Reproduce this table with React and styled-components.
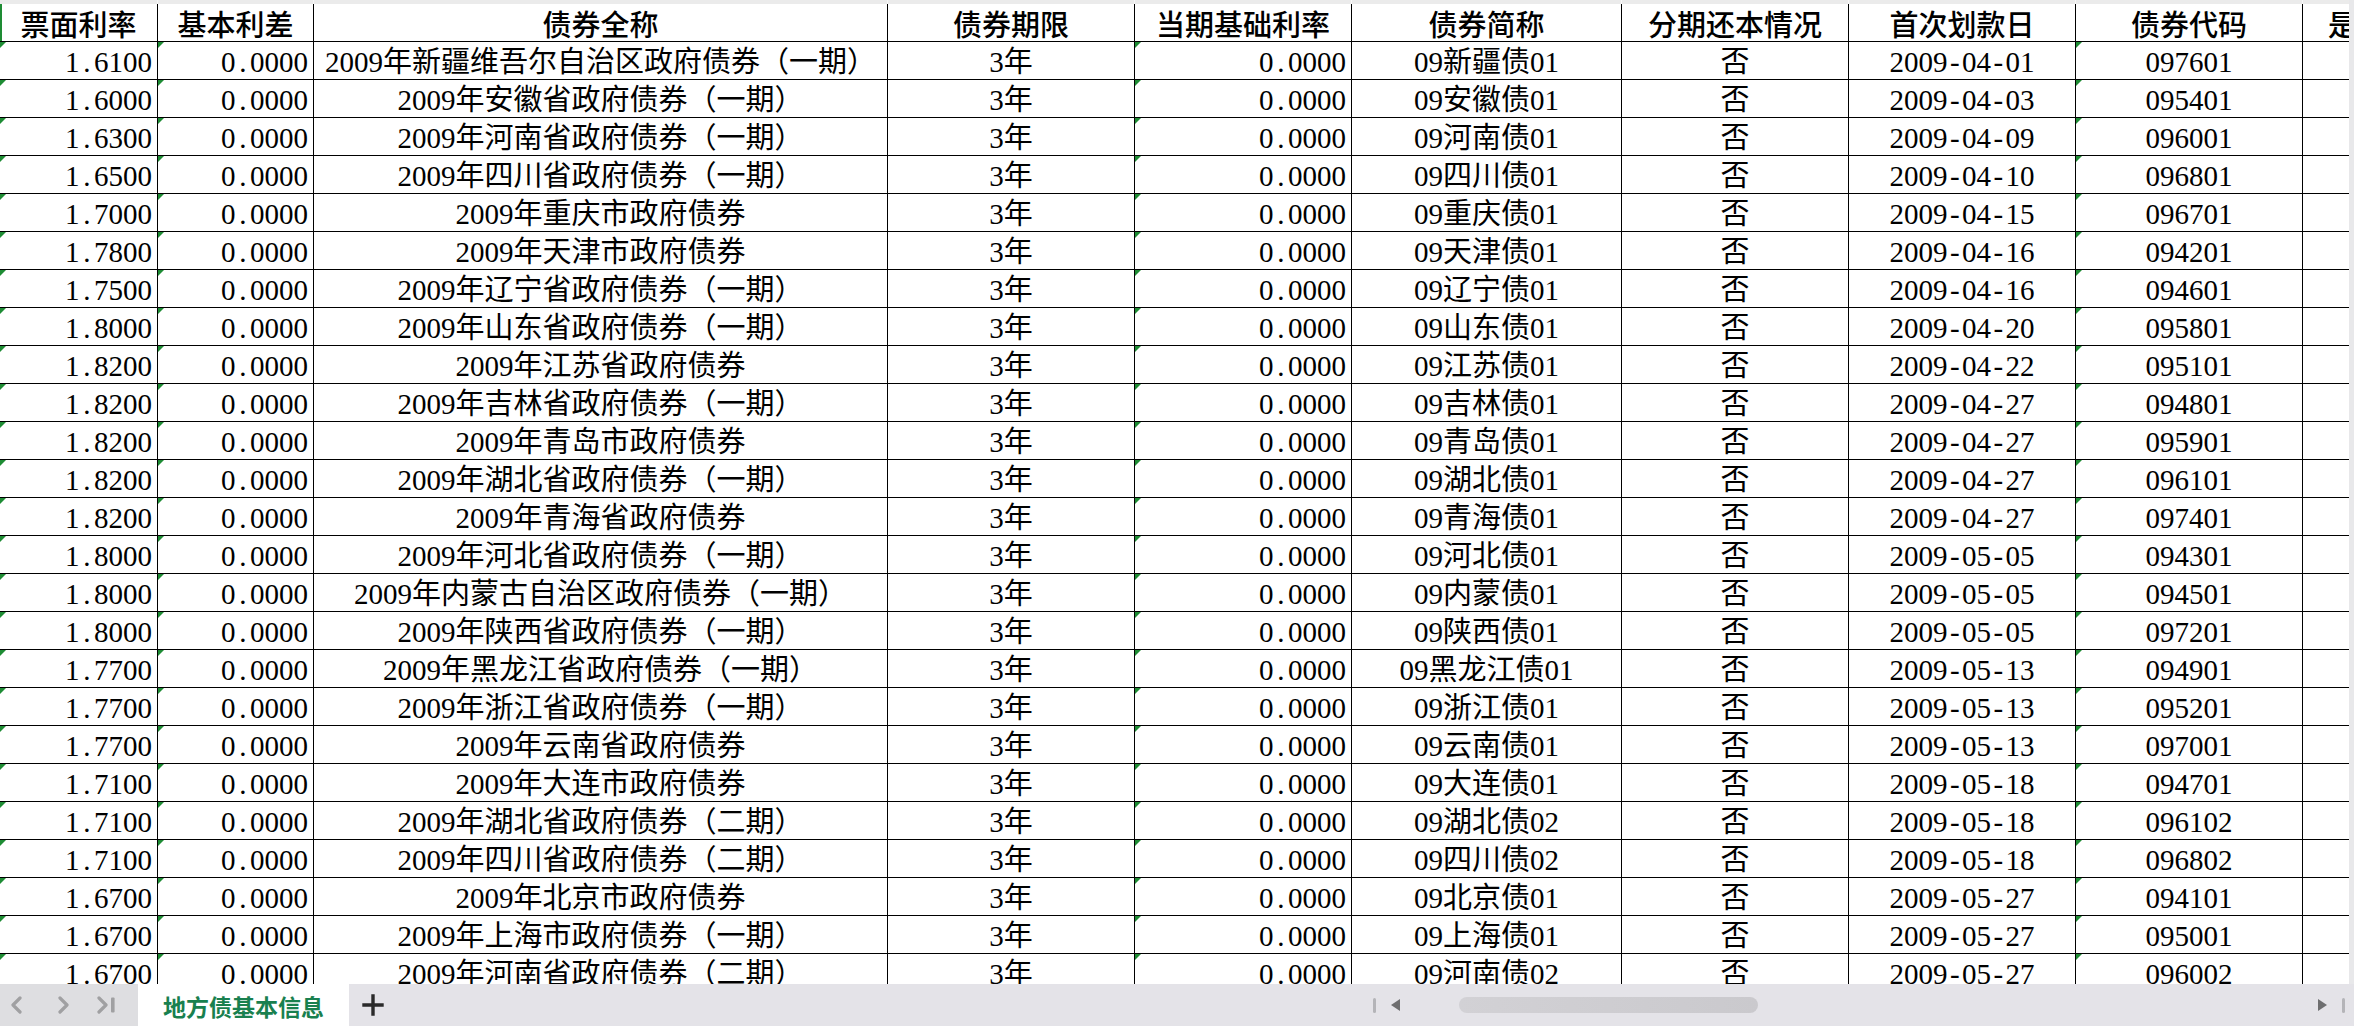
import React from "react";
import styled, { createGlobalStyle } from "styled-components";

const GlobalStyle = createGlobalStyle`
  html, body { margin: 0; padding: 0; background: #ffffff; overflow: hidden; }
  #root { width: 2354px; height: 1026px; }
`;

const COLS = [158, 156, 574, 247, 217, 270, 227, 227, 227, 200];
const TEMPLATE = COLS.map((w) => `${w}px`).join(" ");

const Page = styled.div`
  width: 2354px;
  height: 1026px;
  display: flex;
  flex-direction: column;
  font-family: "Liberation Serif", "Noto Sans CJK SC", serif;
  color: #000;
`;

const SheetArea = styled.div`
  flex: 1;
  display: flex;
  min-height: 0;
`;

const GridViewport = styled.div`
  flex: 1;
  overflow: hidden;
  display: flex;
  flex-direction: column;
`;

const VScroll = styled.div`
  width: 5px;
  background: #e8e8ea;
`;

const Row = styled.div`
  display: grid;
  grid-template-columns: ${TEMPLATE};
  flex: none;
`;

const StripCell = styled.div`
  height: 4px;
  background: #ebebeb;
  border-right: 1px solid #f7f7f7;
  box-sizing: border-box;
`;

const Cell = styled.div`
  position: relative;
  box-sizing: border-box;
  height: 38px;
  border-right: 1px solid #000;
  border-bottom: 1px solid #000;
  display: flex;
  align-items: center;
  justify-content: ${(p) => (p.$align === "right" ? "flex-end" : "center")};
  padding: 3px 5px 0 5px;
  font-size: 29px;
  line-height: 30px;
  white-space: nowrap;
  ${(p) =>
    p.$marker &&
    `
    &::before {
      content: "";
      position: absolute;
      left: 0;
      top: 0;
      width: 0;
      height: 0;
      border-top: 6px solid #1e8c34;
      border-right: 6px solid transparent;
    }
  `}
`;

const HeadCell = styled(Cell)`
  justify-content: ${(p) => (p.$lead ? "flex-start" : "center")};
  padding: 1px 5px 0 ${(p) => (p.$lead ? "25px" : "5px")};
  font-family: "Noto Sans CJK SC", serif;
  font-size: 29px;
  line-height: 32px;
  font-weight: 500;
  ${(p) => p.$lead && `overflow: hidden;`}
  ${(p) => p.$active && `box-shadow: inset 2px 0 0 #1e8c34;`}
`;

const HalfChar = styled.span`
  display: inline-block;
  width: 0.5em;
  text-align: center;
`;

const TabBar = styled.div`
  height: 42px;
  flex: none;
  display: flex;
  align-items: stretch;
  background: #e4e3e8;
`;

const NavGroup = styled.div`
  width: 138px;
  display: flex;
  align-items: center;
  padding-left: 10px;
  background: #dedee1;
  box-sizing: border-box;
`;

const NavBtn = styled.span`
  width: ${(p) => p.$w}px;
  display: flex;
  align-items: center;
  justify-content: flex-start;
  color: #a0a0a2;
`;

const SheetTab = styled.div`
  width: 211px;
  background: #ffffff;
  display: flex;
  align-items: center;
  justify-content: center;
  font-family: "Noto Sans CJK SC", sans-serif;
  font-weight: 700;
  font-size: 23px;
  line-height: 28px;
  color: #19804f;
  padding-top: 2px;
  box-sizing: border-box;
`;

const AddBtn = styled.div`
  width: 48px;
  display: flex;
  align-items: center;
  justify-content: center;
  color: #2a2a2a;
`;

const Spacer = styled.div`
  flex: 1;
`;

const HScroll = styled.div`
  width: 994px;
  display: flex;
  align-items: center;
  padding-left: 13px;
  box-sizing: border-box;
`;

const Sep = styled.span`
  width: 3px;
  height: 15px;
  border-radius: 2px;
  background: #b4b4b8;
  flex: none;
`;

const ArrowBox = styled.span`
  width: ${(p) => p.$w}px;
  display: flex;
  justify-content: center;
  align-items: center;
  flex: none;
`;

const Track = styled.div`
  flex: 1;
  display: flex;
  align-items: center;
`;

const Thumb = styled.div`
  width: 299px;
  height: 16px;
  border-radius: 8px;
  background: linear-gradient(90deg, #d2d1d5, #cac9cd);
  margin-left: ${(p) => p.$offset}px;
`;

const headers = [
  "票面利率",
  "基本利差",
  "债券全称",
  "债券期限",
  "当期基础利率",
  "债券简称",
  "分期还本情况",
  "首次划款日",
  "债券代码",
  "是否城投",
];

const rows = [
  ["1.6100", "2009年新疆维吾尔自治区政府债券（一期）", "09新疆债01", "2009-04-01", "097601"],
  ["1.6000", "2009年安徽省政府债券（一期）", "09安徽债01", "2009-04-03", "095401"],
  ["1.6300", "2009年河南省政府债券（一期）", "09河南债01", "2009-04-09", "096001"],
  ["1.6500", "2009年四川省政府债券（一期）", "09四川债01", "2009-04-10", "096801"],
  ["1.7000", "2009年重庆市政府债券", "09重庆债01", "2009-04-15", "096701"],
  ["1.7800", "2009年天津市政府债券", "09天津债01", "2009-04-16", "094201"],
  ["1.7500", "2009年辽宁省政府债券（一期）", "09辽宁债01", "2009-04-16", "094601"],
  ["1.8000", "2009年山东省政府债券（一期）", "09山东债01", "2009-04-20", "095801"],
  ["1.8200", "2009年江苏省政府债券", "09江苏债01", "2009-04-22", "095101"],
  ["1.8200", "2009年吉林省政府债券（一期）", "09吉林债01", "2009-04-27", "094801"],
  ["1.8200", "2009年青岛市政府债券", "09青岛债01", "2009-04-27", "095901"],
  ["1.8200", "2009年湖北省政府债券（一期）", "09湖北债01", "2009-04-27", "096101"],
  ["1.8200", "2009年青海省政府债券", "09青海债01", "2009-04-27", "097401"],
  ["1.8000", "2009年河北省政府债券（一期）", "09河北债01", "2009-05-05", "094301"],
  ["1.8000", "2009年内蒙古自治区政府债券（一期）", "09内蒙债01", "2009-05-05", "094501"],
  ["1.8000", "2009年陕西省政府债券（一期）", "09陕西债01", "2009-05-05", "097201"],
  ["1.7700", "2009年黑龙江省政府债券（一期）", "09黑龙江债01", "2009-05-13", "094901"],
  ["1.7700", "2009年浙江省政府债券（一期）", "09浙江债01", "2009-05-13", "095201"],
  ["1.7700", "2009年云南省政府债券", "09云南债01", "2009-05-13", "097001"],
  ["1.7100", "2009年大连市政府债券", "09大连债01", "2009-05-18", "094701"],
  ["1.7100", "2009年湖北省政府债券（二期）", "09湖北债02", "2009-05-18", "096102"],
  ["1.7100", "2009年四川省政府债券（二期）", "09四川债02", "2009-05-18", "096802"],
  ["1.6700", "2009年北京市政府债券", "09北京债01", "2009-05-27", "094101"],
  ["1.6700", "2009年上海市政府债券（一期）", "09上海债01", "2009-05-27", "095001"],
  ["1.6700", "2009年河南省政府债券（二期）", "09河南债02", "2009-05-27", "096002"],
];

// Render '.' and '-' in half-width boxes, like the sheet's font does
const Num = ({ text }) => (
  <span>
    {text.split(/([.\-])/).map((part, i) =>
      part === "." || part === "-" ? (
        <HalfChar key={i}>{part}</HalfChar>
      ) : (
        <React.Fragment key={i}>{part}</React.Fragment>
      )
    )}
  </span>
);

const Chevron = ({ dir }) => (
  <svg width="14" height="18" viewBox="0 0 14 18">
    <path
      d={dir === "left" ? "M10 2 L3 9 L10 16" : "M4 2 L11 9 L4 16"}
      fill="none"
      stroke="currentColor"
      strokeWidth="3.2"
      strokeLinecap="round"
      strokeLinejoin="round"
    />
  </svg>
);

const LastIcon = () => (
  <svg width="22" height="18" viewBox="0 0 22 18">
    <path d="M3 2 L10 9 L3 16" fill="none" stroke="currentColor" strokeWidth="3.2" strokeLinecap="round" strokeLinejoin="round" />
    <rect x="15" y="1.5" width="3.6" height="15" rx="1" fill="currentColor" />
  </svg>
);

const PlusIcon = () => (
  <svg width="22" height="22" viewBox="0 0 22 22">
    <path d="M11 2 V20 M2 11 H20" stroke="currentColor" strokeWidth="3.4" strokeLinecap="square" />
  </svg>
);

const Tri = ({ dir }) => (
  <svg width="10" height="12" viewBox="0 0 10 12">
    <path d={dir === "left" ? "M9 0 L0 6 L9 12 Z" : "M1 0 L10 6 L1 12 Z"} fill="#6e6e70" />
  </svg>
);

export default function App() {
  return (
    <Page>
      <GlobalStyle />
      <SheetArea>
        <GridViewport>
          <Row>
            {COLS.map((_, i) => (
              <StripCell key={i} />
            ))}
          </Row>
          <Row>
            {headers.map((h, i) => (
              <HeadCell key={i} $lead={i === 9} $active={i === 0}>
                {h}
              </HeadCell>
            ))}
          </Row>
          {rows.map((r, idx) => (
            <Row key={idx}>
              <Cell $align="right" $marker><Num text={r[0]} /></Cell>
              <Cell $align="right" $marker><Num text="0.0000" /></Cell>
              <Cell>{r[1]}</Cell>
              <Cell>3年</Cell>
              <Cell $align="right" $marker><Num text="0.0000" /></Cell>
              <Cell>{r[2]}</Cell>
              <Cell>否</Cell>
              <Cell><Num text={r[3]} /></Cell>
              <Cell $marker>{r[4]}</Cell>
              <Cell />
            </Row>
          ))}
        </GridViewport>
        <VScroll />
      </SheetArea>
      <TabBar>
        <NavGroup>
          <NavBtn $w={46}><Chevron dir="left" /></NavBtn>
          <NavBtn $w={40}><Chevron dir="right" /></NavBtn>
          <NavBtn $w={30}><LastIcon /></NavBtn>
        </NavGroup>
        <SheetTab>地方债基本信息</SheetTab>
        <AddBtn><PlusIcon /></AddBtn>
        <Spacer />
        <HScroll>
          <Sep />
          <ArrowBox $w={40}><Tri dir="left" /></ArrowBox>
          <Track>
            <Thumb $offset={43} />
          </Track>
          <ArrowBox $w={40}><Tri dir="right" /></ArrowBox>
          <Sep />
          <ArrowBox $w={9} />
        </HScroll>
      </TabBar>
    </Page>
  );
}
